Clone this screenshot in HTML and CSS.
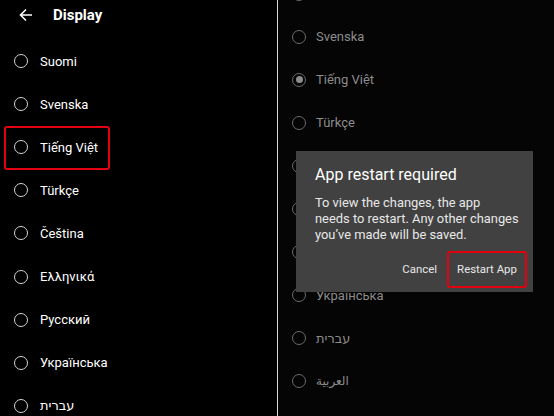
FILE: index.html
```html
<!doctype html>
<html lang="en">
    <head>
        <meta charset="UTF-8"/>
        <title>Display language</title>
        <link rel="stylesheet" href="styles.css">
    </head>
    <body>
        <div class="screen">
            <div class="panel panel-left">
                <div class="header">
                    <svg class="back-icon" width="14" height="14" viewBox="0 0 14 14">
                        <path d="M13 7H2M7 1.5L1.5 7 7 12.5" fill="none" stroke="#fff" stroke-width="1.6"/>
                    </svg>
                    <h1>Display</h1>
                </div>
                <ul class="lang-list">
                    <li><span class="radio"></span>Suomi</li>
                    <li><span class="radio"></span>Svenska</li>
                    <li class="highlight"><span class="radio"></span>Tiếng Việt</li>
                    <li><span class="radio"></span>Türkçe</li>
                    <li><span class="radio"></span>Čeština</li>
                    <li><span class="radio"></span>Ελληνικά</li>
                    <li><span class="radio"></span>Русский</li>
                    <li><span class="radio"></span>Українська</li>
                    <li><span class="radio"></span>עברית</li>
                </ul>
            </div>
            <div class="divider"></div>
            <div class="panel panel-right">
                <ul class="lang-list dimmed">
                    <li><span class="radio"></span>Suomi</li>
                    <li><span class="radio"></span>Svenska</li>
                    <li><span class="radio checked"></span>Tiếng Việt</li>
                    <li><span class="radio"></span>Türkçe</li>
                    <li><span class="radio"></span>Čeština</li>
                    <li><span class="radio"></span>Ελληνικά</li>
                    <li><span class="radio"></span>Русский</li>
                    <li><span class="radio"></span>Українська</li>
                    <li><span class="radio"></span>עברית</li>
                    <li class="arabic"><span class="radio"></span>العربية</li>
                </ul>
                <div class="dialog">
                    <h2>App restart required</h2>
                    <p>To view the changes, the app<br>needs to restart. Any other changes<br>you’ve made will be saved.</p>
                    <div class="dialog-actions">
                        <button class="btn btn-cancel">Cancel</button>
                        <button class="btn btn-restart">Restart App</button>
                    </div>
                </div>
            </div>
        </div>
    </body>
</html>
```

FILE: styles.css
```css
html, body {
    margin: 0;
    height: 100%;
    background: #000;
}
body {
    font-family: Roboto, "Noto Sans", "DejaVu Sans", sans-serif;
    color: #fff;
    overflow: hidden;
}
.screen {
    display: flex;
    height: 416px;
}
.panel {
    position: relative;
    overflow: hidden;
}
.panel-left {
    width: 277px;
    flex-shrink: 0;
}
.divider {
    width: 1px;
    background: #d8d8d8;
}
.panel-right {
    flex-grow: 1;
    background: #050505;
}
.header {
    display: flex;
    align-items: center;
    height: 30px;
    padding-left: 19px;
}
.back-icon {
    margin-right: 20px;
}
h1 {
    margin: 0;
    font-size: 15px;
    font-weight: 700;
}
.lang-list {
    list-style: none;
    margin: 9.5px 0 0;
    padding: 0;
}
.lang-list li {
    display: flex;
    align-items: center;
    height: 43.1px;
    padding-left: 14px;
    font-size: 13px;
    box-sizing: border-box;
}
.radio {
    width: 12px;
    height: 12px;
    border: 1.7px solid #d4d4d4;
    border-radius: 50%;
    margin-right: 12px;
    flex-shrink: 0;
    position: relative;
}
.lang-list .highlight {
    position: relative;
}
.lang-list .highlight::after {
    content: "";
    position: absolute;
    left: 4px;
    top: 0;
    width: 102px;
    height: 40px;
    border: 2.5px solid #e3000f;
    border-radius: 3px;
}
.dimmed {
    margin-top: -28px;
}
.dimmed li {
    color: #8c8c8c;
}
.dimmed .radio {
    border-color: #6b6b6b;
    margin-right: 10px;
}
.dimmed .radio.checked::after {
    content: "";
    position: absolute;
    left: 2.5px;
    top: 2.5px;
    width: 7px;
    height: 7px;
    border-radius: 50%;
    background: #8c8c8c;
}
.dimmed .arabic {
    font-size: 12px;
}
.dialog {
    position: absolute;
    left: 18px;
    top: 151px;
    width: 237px;
    height: 141px;
    box-sizing: border-box;
    padding: 14px 20px 0 19px;
    background: #414141;
}
h2 {
    margin: 0;
    font-size: 16px;
    font-weight: 400;
    line-height: 20px;
}
.dialog p {
    margin: 10px 0 0;
    font-size: 12.9px;
    line-height: 16.2px;
    color: #e8e8e8;
    white-space: nowrap;
}
.dialog-actions {
    display: flex;
    justify-content: flex-end;
    align-items: center;
    margin-top: 7px;
    margin-right: -14px;
}
.btn {
    font-family: inherit;
    font-size: 11.4px;
    color: #e8e8e8;
    background: none;
    border: 0;
    padding: 0;
    cursor: pointer;
}
.btn-cancel {
    margin-right: 10px;
}
.btn-restart {
    width: 80px;
    height: 37px;
    border: 2.5px solid #e3000f;
    border-radius: 3px;
}
```
